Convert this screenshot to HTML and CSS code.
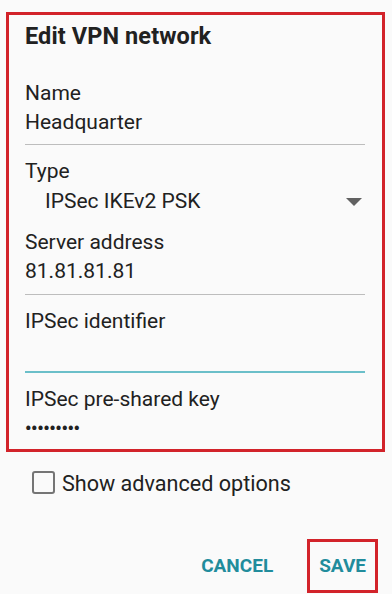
FILE: index.html
```html
<!DOCTYPE html>
<html lang="en">

<head>
    <meta charset="UTF-8">
    <meta name="viewport" content="width=device-width, initial-scale=1.0">
    <title>Edit VPN network</title>
    <link rel="stylesheet" href="styles.css">
</head>

<body>
    <!-- highlighted dialog form -->
    <div class="vpn-box">
        <h1 class="title">Edit VPN network</h1>

        <div class="field field-first">
            <div class="label">Name</div>
            <div class="value">Headquarter</div>
        </div>

        <div class="field-type">
            <div class="label">Type</div>
            <div class="spinner">
                <span>IPSec IKEv2 PSK</span>
                <span class="arrow"></span>
            </div>
        </div>

        <div class="field">
            <div class="label">Server address</div>
            <div class="value">81.81.81.81</div>
        </div>

        <div class="field field-focus">
            <div class="label">IPSec identifier</div>
            <div class="empty"></div>
        </div>

        <div class="field-last">
            <div class="label">IPSec pre-shared key</div>
            <div class="dots">•••••••••</div>
        </div>
    </div>

    <!-- advanced options -->
    <label class="check-row">
        <span class="check-box"></span>
        <span class="check-text">Show advanced options</span>
    </label>

    <!-- dialog buttons -->
    <div class="buttons">
        <button class="btn">CANCEL</button>
        <button class="btn btn-save">SAVE</button>
    </div>
</body>

</html>
```

FILE: styles.css
```css
/* page */
body {
    margin: 0;
    background-color: #fafafa;
    font-family: Roboto, "Liberation Sans", sans-serif;
    color: #212121;
}

/* red highlight frame around the form */
.vpn-box {
    margin: 12px 7px 0 6px;
    height: 426px;
    border: 3px solid #d2232a;
    padding: 8px 17px 0 16px;
    box-sizing: content-box;
}

.title {
    margin: 0;
    font-size: 23.5px;
    line-height: 26px;
    font-weight: 700;
    letter-spacing: 0.1px;
}

.label,
.value,
.spinner {
    font-size: 21px;
    line-height: 29px;
}

.field {
    margin-top: 12px;
    padding-bottom: 8px;
    border-bottom: 1px solid #bdbdbd;
}

.field-first {
    margin-top: 30px;
    padding-bottom: 7px;
}

.field-type {
    margin-top: 12px;
}

/* spinner line with dropdown arrow */
.spinner {
    margin-top: 1px;
    padding-left: 20px;
    display: flex;
    justify-content: space-between;
    align-items: center;
}

.arrow {
    width: 0;
    height: 0;
    margin-right: 3px;
    border-left: 8px solid transparent;
    border-right: 8px solid transparent;
    border-top: 8px solid #616161;
}

.field-focus {
    padding-bottom: 0;
    border-bottom: 2px solid #6bbfc9;
}

.empty {
    height: 35px;
}

.field-last {
    margin-top: 12px;
}

.dots {
    font-size: 18px;
    font-weight: 700;
    line-height: 29px;
    letter-spacing: -0.4px;
}

/* checkbox row */
.check-row {
    display: flex;
    align-items: flex-start;
    margin: 16px 0 0 32px;
}

.check-box {
    width: 19px;
    height: 19px;
    margin-top: 3px;
    border: 2px solid #757575;
    border-radius: 3px;
}

.check-text {
    margin-left: 7px;
    font-size: 21.6px;
    line-height: 31px;
}

/* buttons */
.buttons {
    display: flex;
    justify-content: flex-end;
    margin-top: 40px;
    padding-right: 14px;
}

.btn {
    font-family: Roboto, "Liberation Sans", sans-serif;
    font-size: 19px;
    font-weight: 700;
    line-height: 48px;
    color: #218c9c;
    background: none;
    border: 3px solid transparent;
    padding: 0 9px;
}

.btn-save {
    margin-left: 22px;
    border-color: #d2232a;
}
```
